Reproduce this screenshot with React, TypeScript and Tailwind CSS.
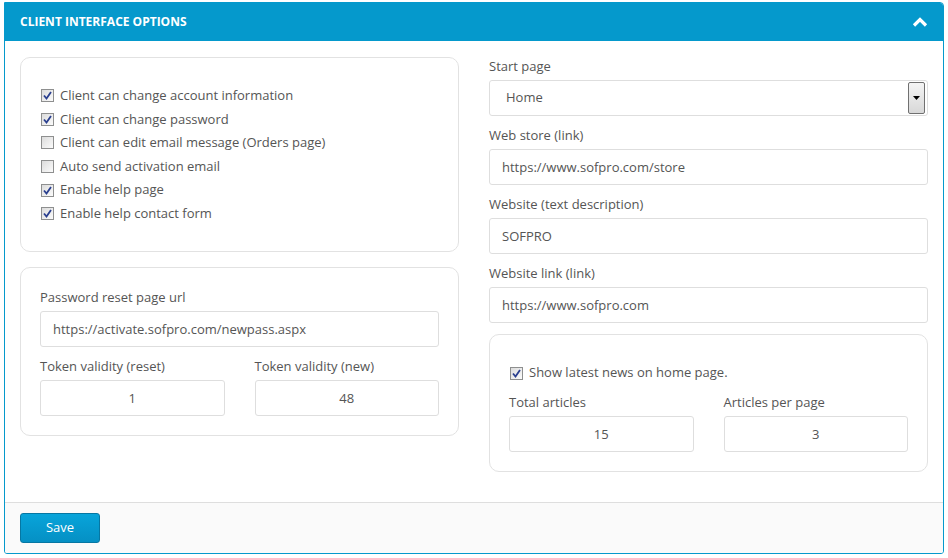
import React from 'react'

function Check({ checked }: { checked?: boolean }) {
  return (
    <span className="flex h-[13px] w-[13px] shrink-0 items-center justify-center border border-[#8e8f8f] bg-gradient-to-br from-[#dcdcdc] to-[#fbfbfb]">
      {checked && (
        <svg width="9" height="9" viewBox="0 0 9 9">
          <path d="M1 4.5 L3.5 7.5 L8 1" fill="none" stroke="#2a3f8f" strokeWidth="1.8" />
        </svg>
      )}
    </span>
  )
}

function Field({ label, value, center }: { label: string; value: string; center?: boolean }) {
  return (
    <div>
      <div className="mb-[5px] h-[18px] leading-[18px]">{label}</div>
      <div
        className={`h-[36px] rounded-[3px] border border-[#dedede] bg-white leading-[34px] ${
          center ? 'text-center' : 'px-3'
        }`}
      >
        {value}
      </div>
    </div>
  )
}

const options = [
  { label: 'Client can change account information', checked: true },
  { label: 'Client can change password', checked: true },
  { label: 'Client can edit email message (Orders page)', checked: false },
  { label: 'Auto send activation email', checked: false },
  { label: 'Enable help page', checked: true },
  { label: 'Enable help contact form', checked: true },
]

export default function App() {
  return (
    <div className="h-[558px] w-[948px] bg-white pl-[4px] pt-[2px] font-['Open_Sans',sans-serif] text-[13px] text-[#555]">
      <div className="w-[940px] overflow-hidden rounded-tr-[4px] rounded-b-[3px] border border-[#0599cc]">
        {/* Header */}
        <div className="flex h-[38px] items-center justify-between bg-[#0599cc] pl-[15px] pr-[15px]">
          <span className="text-[12px] font-bold text-white">CLIENT INTERFACE OPTIONS</span>
          <svg width="16" height="12" viewBox="0 0 16 12">
            <path d="M2 9.5 L8 3.5 L14 9.5" fill="none" stroke="#fff" strokeWidth="3.2" />
          </svg>
        </div>

        {/* Body */}
        <div className="grid grid-cols-2 gap-[30px] px-[15px] pb-[30px] pt-[16px]">
          {/* Left column */}
          <div className="flex flex-col gap-[15px]">
            <div className="rounded-[10px] border border-[#e2e2e2] px-[20px] pb-[25px] pt-[26px]">
              {options.map((o) => (
                <div key={o.label} className="flex h-[23.6px] items-center gap-[6px]">
                  <Check checked={o.checked} />
                  <span>{o.label}</span>
                </div>
              ))}
            </div>

            <div className="rounded-[10px] border border-[#e2e2e2] px-[19px] pb-[19px] pt-[20px]">
              <Field label="Password reset page url" value="https://activate.sofpro.com/newpass.aspx" />
              <div className="mt-[10px] grid grid-cols-2 gap-[30px]">
                <Field label="Token validity (reset)" value="1" center />
                <Field label="Token validity (new)" value="48" center />
              </div>
            </div>
          </div>

          {/* Right column */}
          <div className="flex flex-col">
            <div className="mb-[5px] h-[18px] leading-[18px]">Start page</div>
            <div className="flex h-[36px] items-center rounded-[3px] border border-[#dedede] bg-white pl-[16px] pr-[2px]">
              <span className="flex-1">Home</span>
              <span className="flex h-[32px] w-[17px] items-center justify-center rounded-[2px] border border-[#707070] bg-gradient-to-b from-[#f4f4f4] to-[#d8d8d8]">
                <svg width="7" height="4" viewBox="0 0 7 4">
                  <path d="M0 0 H7 L3.5 4 Z" fill="#000" />
                </svg>
              </span>
            </div>
            <div className="mt-[10px]">
              <Field label="Web store (link)" value="https://www.sofpro.com/store" />
            </div>
            <div className="mt-[10px]">
              <Field label="Website (text description)" value="SOFPRO" />
            </div>
            <div className="mt-[10px]">
              <Field label="Website link (link)" value="https://www.sofpro.com" />
            </div>

            <div className="mt-[11px] rounded-[10px] border border-[#e2e2e2] px-[19px] pb-[19px] pt-[26px]">
              <div className="flex h-[24px] items-center gap-[6px] pl-[1px]">
                <Check checked />
                <span>Show latest news on home page.</span>
              </div>
              <div className="mt-[8px] grid grid-cols-2 gap-[30px]">
                <Field label="Total articles" value="15" center />
                <Field label="Articles per page" value="3" center />
              </div>
            </div>
          </div>
        </div>

        {/* Footer */}
        <div className="h-[51px] border-t border-[#dedede] bg-[#fafafa] px-[15px] pt-[10px]">
          <button className="h-[30px] w-[80px] rounded-[3px] border border-[#0677a3] bg-gradient-to-b from-[#08a4da] to-[#0590c4] text-[13px] text-white">
            Save
          </button>
        </div>
      </div>
    </div>
  )
}
